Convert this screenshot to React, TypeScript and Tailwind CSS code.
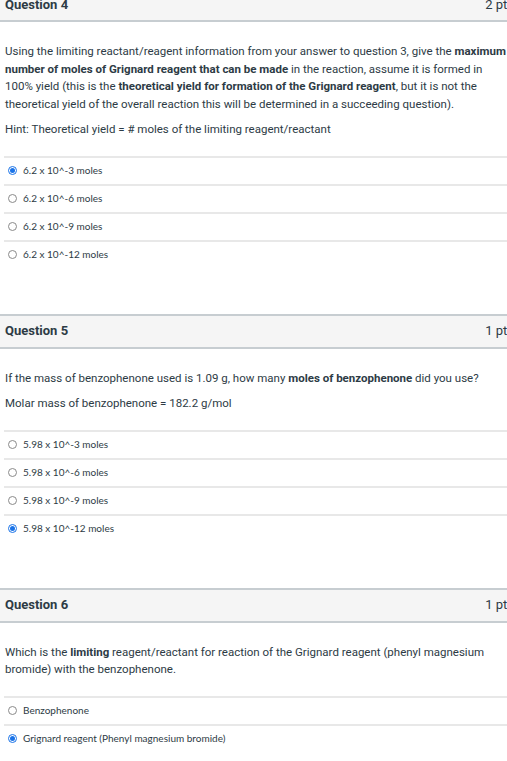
import React from "react";

type Answer = { label: string; checked?: boolean };

type Question = {
  title: string;
  points: string;
  body: React.ReactNode[];
  answers: Answer[];
};

const questions: Question[] = [
  {
    title: "Question 4",
    points: "2 pts",
    body: [
      <>
        Using the limiting reactant/reagent information from your answer to question 3, give the{" "}
        <b>maximum number of moles of Grignard reagent that can be made</b> in the reaction, assume it
        is formed in 100% yield (this is the{" "}
        <b>theoretical yield for formation of the Grignard reagent</b>, but it is not the theoretical
        yield of the overall reaction this will be determined in a succeeding question).
      </>,
      <>Hint: Theoretical yield = # moles of the limiting reagent/reactant</>,
    ],
    answers: [
      { label: "6.2 x 10^-3 moles", checked: true },
      { label: "6.2 x 10^-6 moles" },
      { label: "6.2 x 10^-9 moles" },
      { label: "6.2 x 10^-12 moles" },
    ],
  },
  {
    title: "Question 5",
    points: "1 pts",
    body: [
      <>
        If the mass of benzophenone used is 1.09 g, how many <b>moles of benzophenone</b> did you use?
      </>,
      <>Molar mass of benzophenone = 182.2 g/mol</>,
    ],
    answers: [
      { label: "5.98 x 10^-3 moles" },
      { label: "5.98 x 10^-6 moles" },
      { label: "5.98 x 10^-9 moles" },
      { label: "5.98 x 10^-12 moles", checked: true },
    ],
  },
  {
    title: "Question 6",
    points: "1 pts",
    body: [
      <>
        Which is the <b>limiting</b> reagent/reactant for reaction of the Grignard reagent (phenyl
        magnesium bromide) with the benzophenone.
      </>,
    ],
    answers: [
      { label: "Benzophenone" },
      { label: "Grignard reagent (Phenyl magnesium bromide)", checked: true },
    ],
  },
];

function Radio({ checked }: { checked?: boolean }) {
  return checked ? (
    <span className="flex h-[9px] w-[9px] items-center justify-center rounded-full border border-[#1a73e8] bg-white">
      <span className="h-[5px] w-[5px] rounded-full bg-[#1a73e8]" />
    </span>
  ) : (
    <span className="h-[9px] w-[9px] rounded-full border border-[#8a8a8a] bg-white" />
  );
}

export default function App() {
  return (
    <div className="h-[761px] w-[507px] overflow-hidden bg-white">
      <div
        className="-mt-[13px] w-[526px] text-[#2d3b45]"
        style={{ fontFamily: "Roboto, 'Liberation Sans', sans-serif" }}
      >
        {questions.map((q) => (
          <div key={q.title} className="mb-[46px]">
            {/* Header */}
            <div className="flex h-[35px] items-center justify-between border-y-2 border-[#c7cdd1] bg-[#f5f5f5] pl-[5px] pr-[12px]">
              <span className="text-[13px] font-bold">{q.title}</span>
              <span className="text-[13px]">{q.points}</span>
            </div>

            {/* Body */}
            <div className="pl-[5px] pr-[16px] pt-[21px] text-[11.5px] leading-[17.5px]">
              {q.body.map((p, i) => (
                <p key={i} className="mb-[8px]">
                  {p}
                </p>
              ))}
            </div>

            {/* Answers */}
            <div className="ml-[4px] mt-[17px]">
              {q.answers.map((a) => (
                <div
                  key={a.label}
                  className="flex h-[28px] items-center gap-[6px] border-t-2 border-[#e8e8e8] pl-[4px]"
                >
                  <Radio checked={a.checked} />
                  <span
                    className="text-[10px] text-[#2d3b45]"
                    style={{ fontFamily: "Lato, 'Open Sans', sans-serif" }}
                  >
                    {a.label}
                  </span>
                </div>
              ))}
            </div>
          </div>
        ))}
      </div>
    </div>
  );
}
